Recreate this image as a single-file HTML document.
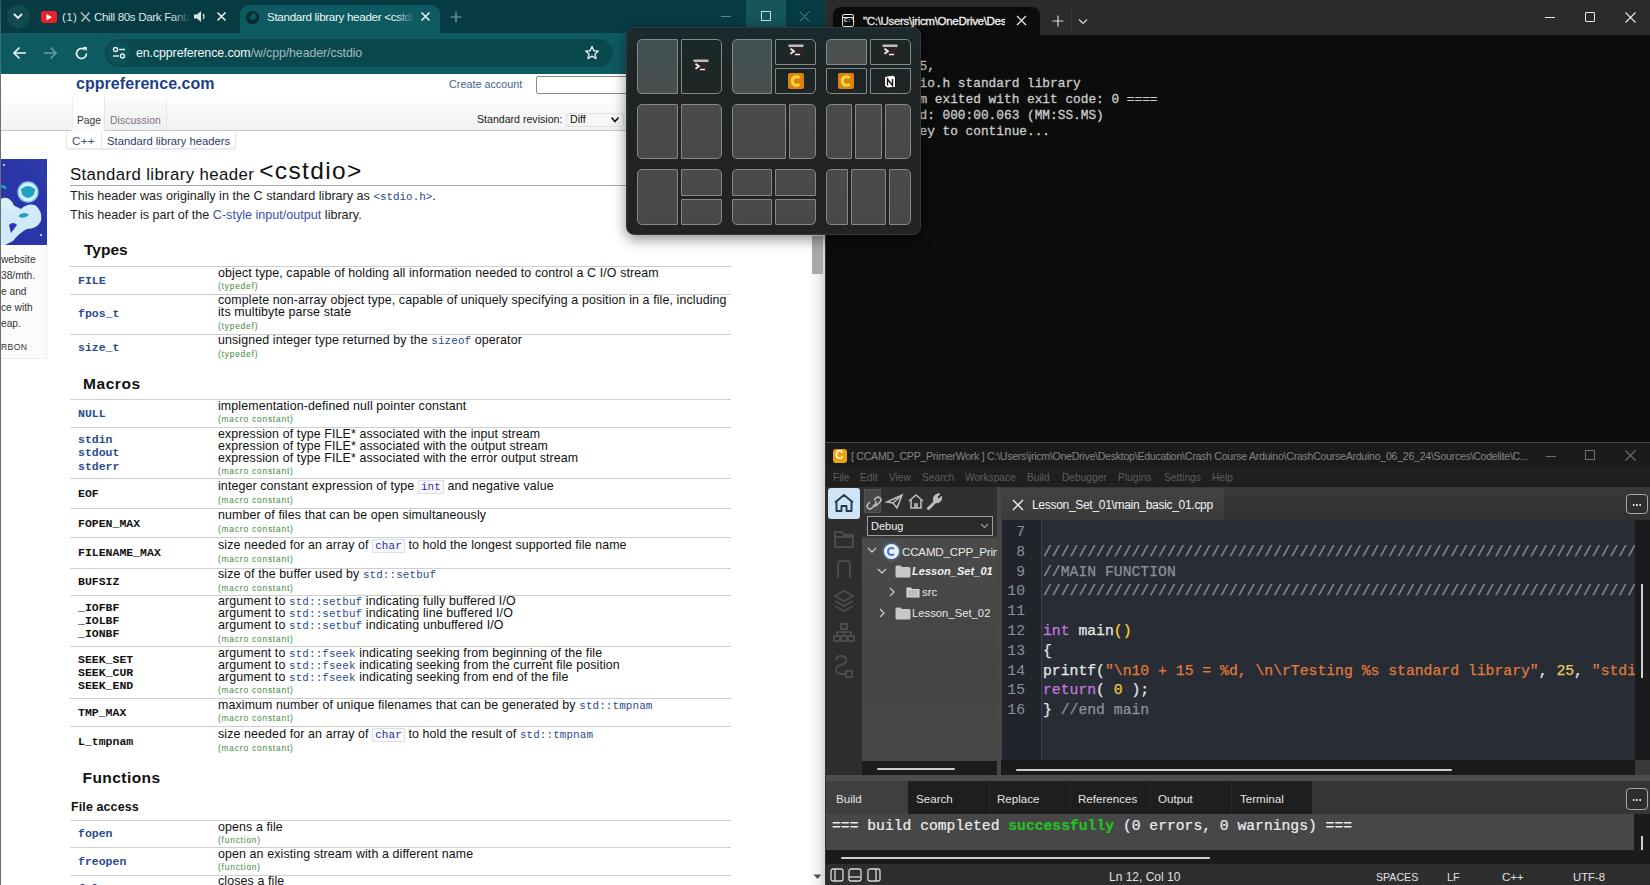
<!DOCTYPE html>
<html><head><meta charset="utf-8">
<style>
*{box-sizing:border-box}
html,body{margin:0;padding:0}
body{width:1650px;height:885px;position:relative;overflow:hidden;background:#0c0c0c;font-family:"Liberation Sans",sans-serif}
.a{position:absolute}
.m{font-family:"Liberation Mono",monospace}
.nw{white-space:pre}
/* browser page */
.pg{font-size:12.4px;color:#222;line-height:12px}
.ln{position:absolute;left:70px;width:661px;height:1px;background:#cfcfcf}
.dsc{position:absolute;left:218px;white-space:pre;font-size:12.4px;letter-spacing:0.12px;color:#111}
.mk{position:absolute;left:218px;white-space:pre;font-size:8.4px;color:#3c8a3c;letter-spacing:0.2px}
.nm{position:absolute;left:78px;white-space:pre;font-family:"Liberation Mono",monospace;font-weight:bold;font-size:11.5px;color:#111}
.lk{color:#2a4b8d}
.cd{font-family:"Liberation Mono",monospace;color:#2a4b8d}
.h3{position:absolute;left:82px;font-weight:bold;font-size:14.5px;letter-spacing:0.9px;color:#111;white-space:pre}
.box{border:1px solid #dde;background:#f8f8ff;padding:0 2px}
</style></head>
<body>

<!-- ================= BROWSER ================= -->
<div class="a" id="browser" style="left:0;top:0;width:826px;height:885px;background:#fff;overflow:hidden">
  <!-- tab strip -->
  <div class="a" style="left:0;top:0;width:826px;height:33px;background:#073b44"></div>
  <div class="a" style="left:0;top:0;width:1px;height:885px;background:linear-gradient(#2f5a60 0px,#3f7a80 73px,#6e6e6e 74px,#6e6e6e 885px);z-index:5"></div>
  <!-- tab dropdown -->
  <div class="a" style="left:7px;top:5px;width:23px;height:23px;border-radius:12px;background:#134a50"></div>
  <svg class="a" style="left:12px;top:11px" width="12" height="10"><path d="M2 3 L6 7 L10 3" stroke="#e8f4f4" stroke-width="1.8" fill="none"/></svg>
  <!-- tab 1 -->
  <div class="a" style="left:41px;top:11px;width:16px;height:12px;border-radius:3px;background:#e8202a"></div>
  <svg class="a" style="left:46px;top:14px" width="7" height="7"><path d="M0.5 0 L6 3.2 L0.5 6.4Z" fill="#fff"/></svg>
  <div class="a nw" style="left:62px;top:10px;font-size:11.6px;color:#d8e6e6;letter-spacing:0.3px">(1)</div>
  <svg class="a" style="left:80px;top:12px" width="11" height="10"><path d="M1 0.5 L10 9.5 M9.5 0.5 L1.5 9.5" stroke="#a8bcbc" stroke-width="1.6"/></svg>
  <div class="a nw" style="left:94px;top:10px;width:95px;overflow:hidden;font-size:11.6px;color:#d8e6e6;letter-spacing:-0.35px">Chill 80s Dark Fantasy</div>
  <div class="a" style="left:172px;top:6px;width:18px;height:22px;background:linear-gradient(90deg,rgba(7,59,68,0),#073b44)"></div>
  <svg class="a" style="left:193px;top:10px" width="14" height="13"><path d="M1 4.5 H4 L8 1 V12 L4 8.5 H1Z" fill="#d8e6e6"/><path d="M10 4 Q12 6.5 10 9" stroke="#d8e6e6" stroke-width="1.3" fill="none"/></svg>
  <svg class="a" style="left:216px;top:11px" width="11" height="11"><path d="M1.5 1.5 L9.5 9.5 M9.5 1.5 L1.5 9.5" stroke="#e8f0f0" stroke-width="1.6"/></svg>
  <!-- active tab -->
  <div class="a" style="left:240px;top:5px;width:200px;height:30px;background:#0e5a61;border-radius:9px 9px 0 0"></div>
  <svg class="a" style="left:245px;top:10px" width="15" height="15"><circle cx="7.5" cy="7.5" r="5.5" stroke="#08282c" stroke-width="2.2" fill="none"/><path d="M7 4 A3.5 3.5 0 1 0 11 8" stroke="#08282c" stroke-width="1.5" fill="none"/></svg>
  <div class="a nw" style="left:267px;top:10px;width:146px;overflow:hidden;font-size:11.6px;color:#eef6f6;letter-spacing:-0.3px">Standard library header &lt;cstdio&gt;</div>
  <div class="a" style="left:396px;top:6px;width:18px;height:26px;background:linear-gradient(90deg,rgba(14,90,97,0),#0e5a61)"></div>
  <svg class="a" style="left:420px;top:11px" width="11" height="11"><path d="M1.5 1.5 L9.5 9.5 M9.5 1.5 L1.5 9.5" stroke="#e8f0f0" stroke-width="1.6"/></svg>
  <svg class="a" style="left:450px;top:11px" width="12" height="12"><path d="M6 0.5 V11.5 M0.5 6 H11.5" stroke="#7fa6a8" stroke-width="1.2"/></svg>
  <!-- window controls -->
  <div class="a" style="left:721px;top:16px;width:10px;height:1px;background:#5d8a8e"></div>
  <div class="a" style="left:746px;top:0;width:40px;height:34px;background:#15555b"></div>
  <div class="a" style="left:761px;top:11px;width:10px;height:10px;border:1px solid #c8dcdc"></div>
  <svg class="a" style="left:799px;top:11px" width="11" height="11"><path d="M0.5 0.5 L10.5 10.5 M10.5 0.5 L0.5 10.5" stroke="#5d8a8e" stroke-width="1"/></svg>

  <!-- toolbar -->
  <div class="a" style="left:0;top:33px;width:826px;height:41px;background:#0e5a61"></div>
  <svg class="a" style="left:12px;top:46px" width="15" height="14"><path d="M14 7 H2 M7.5 1.5 L2 7 L7.5 12.5" stroke="#e8f4f4" stroke-width="1.7" fill="none"/></svg>
  <svg class="a" style="left:43px;top:46px" width="15" height="14"><path d="M1 7 H13 M7.5 1.5 L13 7 L7.5 12.5" stroke="#6d9a9e" stroke-width="1.7" fill="none"/></svg>
  <svg class="a" style="left:74px;top:46px" width="15" height="15"><path d="M12.5 7.5 A5 5 0 1 1 10.5 3.5" stroke="#e8f4f4" stroke-width="1.7" fill="none"/><path d="M8.5 1 H12.8 V5.3Z" fill="#e8f4f4"/></svg>
  <div class="a" style="left:105px;top:39px;width:508px;height:28px;border-radius:14px;background:#0a4850"></div>
  <div class="a" style="left:107px;top:41px;width:24px;height:24px;border-radius:12px;background:#0c5058"></div>
  <svg class="a" style="left:112px;top:46px" width="14" height="14"><circle cx="3.5" cy="3.5" r="2" stroke="#e8f4f4" stroke-width="1.4" fill="none"/><path d="M7 3.5 H13" stroke="#e8f4f4" stroke-width="1.4"/><circle cx="10.5" cy="10" r="2" stroke="#e8f4f4" stroke-width="1.4" fill="none"/><path d="M1 10 H7" stroke="#e8f4f4" stroke-width="1.4"/></svg>
  <div class="a nw" style="left:136px;top:46px;font-size:12.4px;color:#f2f8f8;letter-spacing:-0.1px">en.cppreference.com<span style="color:#9fbcbe">/w/cpp/header/cstdio</span></div>
  <svg class="a" style="left:584px;top:45px" width="16" height="16"><path d="M8 1.5 L9.9 5.7 L14.4 6.1 L11 9.1 L12 13.6 L8 11.2 L4 13.6 L5 9.1 L1.6 6.1 L6.1 5.7Z" stroke="#e0eeee" stroke-width="1.4" fill="none" stroke-linejoin="round"/></svg>

  <!-- ===== page ===== -->
    <!-- site header -->
  <div class="a nw" style="left:76px;top:76px;font-weight:bold;font-size:16px;line-height:16px;color:#1d3f8a;letter-spacing:0.05px">cppreference.com</div>
  <div class="a nw" style="left:449px;top:78px;font-size:10.8px;line-height:12px;color:#48628c">Create account</div>
  <div class="a" style="left:536px;top:76px;width:100px;height:18px;border:1px solid #8a8a8a;border-radius:2px;background:#fff"></div>
  <!-- nav bar -->
  <div class="a" style="left:1px;top:96px;width:811px;height:34px;background:linear-gradient(#ffffff,#f2f2f2)"></div>
  <div class="a" style="left:1px;top:130px;width:811px;height:1px;background:#c8c8c8"></div>
  <div class="a" style="left:72px;top:97px;width:33px;height:34px;background:linear-gradient(#fff,#fafafa);border-left:1px solid #eee;border-right:1px solid #e4e4ee"></div>
  <div class="a" style="left:105px;top:100px;width:62px;height:30px;background:linear-gradient(#fafafa,#f0f0f2);border-right:1px solid #e4e4ee"></div>
  <div class="a nw" style="left:77px;top:115px;font-size:10.3px;line-height:12px;color:#3a3a3a">Page</div>
  <div class="a nw" style="left:110px;top:115px;font-size:10.3px;line-height:12px;color:#7a6e80;letter-spacing:0.1px">Discussion</div>
  <div class="a nw" style="left:477px;top:113px;font-size:10.6px;line-height:12px;color:#222">Standard revision:</div>
  <div class="a" style="left:566px;top:113px;width:58px;height:14px;border:1px solid #e0e0e0;border-radius:2px;background:#f6f6f6"></div>
  <div class="a nw" style="left:570px;top:113px;font-size:10.6px;line-height:13px;color:#111">Diff</div>
  <svg class="a" style="left:610px;top:116px" width="10" height="8"><path d="M1.5 1.5 L5 5.5 L8.5 1.5" stroke="#111" stroke-width="1.6" fill="none"/></svg>
  <!-- breadcrumbs -->
  <div class="a" style="left:66px;top:131px;width:170px;height:18px;border:1px solid #e6e6ee;border-top:0;border-radius:0 0 4px 4px;background:#fff;box-shadow:0 1px 1px #eee"></div>
  <div class="a" style="left:101px;top:132px;width:1px;height:16px;background:#e6e6ee"></div>
  <div class="a nw" style="left:72px;top:135px;font-size:11.6px;line-height:12px;color:#47506a;letter-spacing:0.3px">C++</div>
  <div class="a nw" style="left:107px;top:135px;font-size:11.25px;line-height:12px;color:#2e3b66">Standard library headers</div>
  <!-- left ad -->
  <div class="a" style="left:1px;top:159px;width:46px;height:200px;background:#fbfbfb;border-right:1px solid #eee;border-bottom:1px solid #eee"></div>
  <svg class="a" style="left:1px;top:159px" width="46" height="86" viewBox="0 0 46 86">
    <rect width="46" height="86" fill="#2a35a8"/>
    <path d="M46 0 L46 30 Q30 10 20 0Z" fill="#3040b0" opacity="0.5"/>
    <path d="M0 44 Q6 40 12 46 L20 50 Q26 44 34 46 Q42 52 40 62 Q36 70 26 70 Q18 74 12 82 L4 86 L0 86Z" fill="#cfeaf8"/>
    <path d="M0 40 Q6 36 12 44 Q14 50 10 52 Q4 48 0 50Z" fill="#d8f0fa"/>
    <circle cx="27" cy="33" r="10" fill="#d8f0fa" stroke="#7fc6ea" stroke-width="1.5"/>
    <path d="M20 30 Q27 24 34 30 Q34 38 27 39 Q20 38 20 30Z" fill="#1fa3c4"/>
    <path d="M18 56 Q24 52 28 56 Q24 60 18 58Z" fill="#2a9ac0"/>
    <path d="M8 66 Q12 62 16 66 L10 74Z" fill="#2a35a8"/>
    <path d="M0 28 Q3 26 5 30" stroke="#1fa3c4" stroke-width="2.5" fill="none"/>
    <circle cx="40" cy="76" r="1" fill="#cfe"/>
    <circle cx="3" cy="6" r="1" fill="#cfe"/>
  </svg>
  <div class="a nw" style="left:1px;top:252px;font-size:10.2px;line-height:16px;color:#333">website<br>38/mth.<br>e and<br>ce with<br>eap.</div>
  <div class="a nw" style="left:1px;top:342px;font-size:8.6px;line-height:10px;color:#333;letter-spacing:0.4px">RBON</div>
  <!-- h1 -->
  <div class="a nw" style="left:70px;top:162px;font-size:16.8px;line-height:20px;color:#111;letter-spacing:0.38px">Standard library header <span style="font-size:24.5px;letter-spacing:1.35px;position:relative;top:-1px">&lt;cstdio&gt;</span></div>
  <div class="a" style="left:70px;top:185px;width:742px;height:1px;background:#aaa"></div>
  <div class="a nw" style="left:70px;top:189px;font-size:12.6px;line-height:14px;color:#222">This header was originally in the <span style="letter-spacing:0.3px">C</span> standard library as <span class="cd" style="font-size:10.9px">&lt;stdio.h&gt;</span>.</div>
  <div class="a nw" style="left:70px;top:208px;font-size:12.6px;line-height:14px;color:#222">This header is part of the <span class="lk" style="color:#3555a5">C-style input/output</span> library.</div>
  <!-- section headings -->
  <div class="h3" style="left:84px;top:242px;line-height:16px;font-size:15.5px;letter-spacing:0px">Types</div>
  <div class="h3" style="left:83px;top:376px;line-height:16px;font-size:15.5px;letter-spacing:0.55px">Macros</div>
  <div class="h3" style="left:82.5px;top:770px;line-height:16px;font-size:15.5px;letter-spacing:0.45px">Functions</div>
  <div class="a nw" style="left:71px;top:800px;font-weight:bold;font-size:12.5px;line-height:14px;color:#111;letter-spacing:0.1px">File access</div>

  <div class="ln" style="top:266px"></div>
<div class="dsc" style="top:265.8px;left:218px">object type, capable of holding all information needed to control a C I/O stream</div>
<div class="mk" style="top:281.4px;letter-spacing:0.8px">(typedef)</div>
<div class="nm lk" style="top:273.6px">FILE</div>
<div class="ln" style="top:294px"></div>
<div class="dsc" style="top:293.0px;left:218px">complete non-array object type, capable of uniquely specifying a position in a file, including</div>
<div class="dsc" style="top:305.0px;left:218px">its multibyte parse state</div>
<div class="mk" style="top:320.6px;letter-spacing:0.8px">(typedef)</div>
<div class="nm lk" style="top:307.2px">fpos_t</div>
<div class="ln" style="top:334px"></div>
<div class="dsc" style="top:333.1px;left:218px">unsigned integer type returned by the <span class="cd" style="font-size:10.9px">sizeof</span> operator</div>
<div class="mk" style="top:348.7px;letter-spacing:0.8px">(typedef)</div>
<div class="nm lk" style="top:341.0px">size_t</div>
<div class="ln" style="top:399px"></div>
<div class="dsc" style="top:398.7px;left:218px">implementation-defined null pointer constant</div>
<div class="mk" style="top:414.3px;letter-spacing:0.8px">(macro constant)</div>
<div class="nm lk" style="top:406.8px">NULL</div>
<div class="ln" style="top:427px"></div>
<div class="dsc" style="top:426.5px;left:218px">expression of type FILE* associated with the input stream</div>
<div class="dsc" style="top:438.5px;left:218px">expression of type FILE* associated with the output stream</div>
<div class="dsc" style="top:450.5px;left:218px">expression of type FILE* associated with the error output stream</div>
<div class="mk" style="top:466.1px;letter-spacing:0.8px">(macro constant)</div>
<div class="nm lk" style="top:433.1px">stdin</div>
<div class="nm lk" style="top:446.3px">stdout</div>
<div class="nm lk" style="top:459.5px">stderr</div>
<div class="ln" style="top:478px"></div>
<div class="dsc" style="top:479.2px;left:218px">integer constant expression of type <span class="box cd" style="font-size:10.9px;color:#2b2f9a">int</span> and negative value</div>
<div class="mk" style="top:494.8px;letter-spacing:0.8px">(macro constant)</div>
<div class="nm" style="top:487.0px">EOF</div>
<div class="ln" style="top:508px"></div>
<div class="dsc" style="top:508.0px;left:218px">number of files that can be open simultaneously</div>
<div class="mk" style="top:523.6px;letter-spacing:0.8px">(macro constant)</div>
<div class="nm" style="top:516.5px">FOPEN_MAX</div>
<div class="ln" style="top:537px"></div>
<div class="dsc" style="top:538.2px;left:218px">size needed for an array of <span class="box cd" style="font-size:10.9px;color:#2b2f9a">char</span> to hold the longest supported file name</div>
<div class="mk" style="top:553.8px;letter-spacing:0.8px">(macro constant)</div>
<div class="nm" style="top:546.1px">FILENAME_MAX</div>
<div class="ln" style="top:568px"></div>
<div class="dsc" style="top:567.2px;left:218px">size of the buffer used by <span class="cd" style="font-size:10.9px">std::setbuf</span></div>
<div class="mk" style="top:582.8px;letter-spacing:0.8px">(macro constant)</div>
<div class="nm" style="top:574.8px">BUFSIZ</div>
<div class="ln" style="top:595px"></div>
<div class="dsc" style="top:594.1px;left:218px">argument to <span class="cd" style="font-size:10.9px">std::setbuf</span> indicating fully buffered I/O</div>
<div class="dsc" style="top:606.1px;left:218px">argument to <span class="cd" style="font-size:10.9px">std::setbuf</span> indicating line buffered I/O</div>
<div class="dsc" style="top:618.1px;left:218px">argument to <span class="cd" style="font-size:10.9px">std::setbuf</span> indicating unbuffered I/O</div>
<div class="mk" style="top:633.7px;letter-spacing:0.8px">(macro constant)</div>
<div class="nm" style="top:600.9px">_IOFBF</div>
<div class="nm" style="top:614.1px">_IOLBF</div>
<div class="nm" style="top:627.3px">_IONBF</div>
<div class="ln" style="top:646px"></div>
<div class="dsc" style="top:645.8px;left:218px">argument to <span class="cd" style="font-size:10.9px">std::fseek</span> indicating seeking from beginning of the file</div>
<div class="dsc" style="top:657.8px;left:218px">argument to <span class="cd" style="font-size:10.9px">std::fseek</span> indicating seeking from the current file position</div>
<div class="dsc" style="top:669.8px;left:218px">argument to <span class="cd" style="font-size:10.9px">std::fseek</span> indicating seeking from end of the file</div>
<div class="mk" style="top:685.4px;letter-spacing:0.8px">(macro constant)</div>
<div class="nm" style="top:652.8px">SEEK_SET</div>
<div class="nm" style="top:666.0px">SEEK_CUR</div>
<div class="nm" style="top:679.2px">SEEK_END</div>
<div class="ln" style="top:698px"></div>
<div class="dsc" style="top:697.8px;left:218px">maximum number of unique filenames that can be generated by <span class="cd" style="font-size:10.9px">std::tmpnam</span></div>
<div class="mk" style="top:713.4px;letter-spacing:0.8px">(macro constant)</div>
<div class="nm" style="top:705.9px">TMP_MAX</div>
<div class="ln" style="top:726px"></div>
<div class="dsc" style="top:727.1px;left:218px">size needed for an array of <span class="box cd" style="font-size:10.9px;color:#2b2f9a">char</span> to hold the result of <span class="cd" style="font-size:10.9px">std::tmpnam</span></div>
<div class="mk" style="top:742.7px;letter-spacing:0.8px">(macro constant)</div>
<div class="nm" style="top:734.7px">L_tmpnam</div>
<div class="ln" style="top:820px"></div>
<div class="dsc" style="top:819.5px;left:218px">opens a file</div>
<div class="mk" style="top:835.1px;letter-spacing:0.8px">(function)</div>
<div class="nm lk" style="top:827.3px">fopen</div>
<div class="ln" style="top:847px"></div>
<div class="dsc" style="top:846.8px;left:218px">open an existing stream with a different name</div>
<div class="mk" style="top:862.4px;letter-spacing:0.8px">(function)</div>
<div class="nm lk" style="top:854.7px">freopen</div>
<div class="ln" style="top:875px"></div>
<div class="dsc" style="top:874.3px;left:218px">closes a file</div>
<div class="mk" style="top:889.9px;letter-spacing:0.8px">(function)</div>
<div class="nm lk" style="top:882.1px">fclose</div>
  <!-- scrollbar -->
  <div class="a" style="left:811px;top:74px;width:14px;height:811px;background:linear-gradient(90deg,#fbfbfb 0%,#f0f0f0 55%,#d4d4d4 100%)"></div>
  <div class="a" style="left:812px;top:236px;width:11px;height:38px;background:#a9a9a9;border-radius:0"></div>
  <svg class="a" style="left:813px;top:874px" width="9" height="6"><path d="M0.5 0.5 H8.5 L4.5 5Z" fill="#505050"/></svg>
  <div class="a" style="left:825px;top:0;width:1px;height:885px;background:#333"></div>
</div>

<!-- ================= TERMINAL ================= -->
<div class="a" id="term" style="left:826px;top:0;width:824px;height:443px;background:#0c0c0c;overflow:hidden">
  <div class="a" style="left:0;top:0;width:824px;height:35px;background:#2b2b2b"></div>
  <div class="a" style="left:7px;top:7px;width:207px;height:30px;background:#0c0c0c;border-radius:8px 8px 0 0"></div>
  <!-- tab icon -->
  <div class="a" style="left:16px;top:14px;width:12px;height:13px;border:1.3px solid #e6e6e6;border-radius:2px"></div>
  <div class="a" style="left:16px;top:17px;width:12px;height:1px;background:#e6e6e6"></div>
  <div class="a nw m" style="left:18px;top:17px;font-size:6px;line-height:8px;color:#e6e6e6;font-weight:bold">C:\</div>
  <div class="a nw" style="left:37px;top:13px;width:142px;overflow:hidden;font-size:11.6px;line-height:15px;color:#f2f2f2;letter-spacing:-0.35px;-webkit-text-stroke-width:0.3px">"C:\Users\jricm\OneDrive\Desktop</div>
  <svg class="a" style="left:190px;top:15px" width="11" height="11"><path d="M1 1 L10 10 M10 1 L1 10" stroke="#e8e8e8" stroke-width="1.3"/></svg>
  <div class="a" style="left:245px;top:9px;width:1px;height:22px;background:#383838"></div>
  <svg class="a" style="left:226px;top:15px" width="12" height="12"><path d="M6 0.5 V11.5 M0.5 6 H11.5" stroke="#d8d8d8" stroke-width="1.2"/></svg>
  <svg class="a" style="left:252px;top:18px" width="10" height="7"><path d="M1 1.5 L5 5.5 L9 1.5" stroke="#d8d8d8" stroke-width="1.2" fill="none"/></svg>
  <!-- window controls -->
  <div class="a" style="left:719px;top:17px;width:10px;height:1px;background:#e8e8e8"></div>
  <div class="a" style="left:759px;top:12px;width:10px;height:10px;border:1px solid #e8e8e8;border-radius:1px"></div>
  <svg class="a" style="left:799px;top:12px" width="11" height="11"><path d="M0.5 0.5 L10.5 10.5 M10.5 0.5 L0.5 10.5" stroke="#e8e8e8" stroke-width="1.1"/></svg>
  <!-- content -->
  <div class="a nw m" style="left:9px;top:43px;font-size:12.8px;line-height:16.25px;color:#cccccc;-webkit-text-stroke:0.3px #cccccc">
10 + 15 = 25,
Testing stdio.h standard library
==== Program exited with exit code: 0 ====
Time elapsed: 000:00.063 (MM:SS.MS)
Press any key to continue...</div>
</div>

<!-- ================= CODELITE ================= -->
<div class="a" id="cl" style="left:826px;top:442px;width:824px;height:443px;background:#1c1c1c;overflow:hidden">
  <div class="a" style="left:0;top:0;width:824px;height:1px;background:#4a4a4a"></div>
  <!-- title bar -->
  <div class="a" style="left:0;top:1px;width:824px;height:23px;background:#1b1b1b"></div>
  <div class="a" style="left:7px;top:7px;width:14px;height:14px;border-radius:3px;background:#e8a21a"></div>
  <div class="a nw" style="left:9px;top:6px;font-weight:bold;font-size:12px;line-height:15px;color:#fff3b0">C</div>
  <div class="a nw" style="left:25px;top:7px;font-size:10.6px;line-height:14px;color:#858585;letter-spacing:-0.27px">[ CCAMD_CPP_PrimerWork ] C:\Users\jricm\OneDrive\Desktop\Education\Crash Course Arduino\CrashCourseArduino_06_26_24\Sources\Codelite\C...</div>
  <div class="a" style="left:720px;top:14px;width:10px;height:1px;background:#6e6e6e"></div>
  <div class="a" style="left:759px;top:8px;width:10px;height:10px;border:1px solid #6e6e6e"></div>
  <svg class="a" style="left:799px;top:8px" width="11" height="11"><path d="M0.5 0.5 L10.5 10.5 M10.5 0.5 L0.5 10.5" stroke="#6e6e6e" stroke-width="1.1"/></svg>
  <!-- menu bar -->
  <div class="a" style="left:0;top:24px;width:824px;height:21px;background:#1f1f1f"></div>
  <div class="a nw" style="top:29px;left:0;font-size:10.2px;line-height:13px;color:#5e5e5e">
    <span class="a" style="top:0;left:7px">File</span><span class="a" style="top:0;left:34px">Edit</span><span class="a" style="top:0;left:63px">View</span><span class="a" style="top:0;left:96px">Search</span><span class="a" style="top:0;left:139px">Workspace</span><span class="a" style="top:0;left:201px">Build</span><span class="a" style="top:0;left:236px">Debugger</span><span class="a" style="top:0;left:292px">Plugins</span><span class="a" style="top:0;left:338px">Settings</span><span class="a" style="top:0;left:386px">Help</span>
  </div>
  <!-- main area -->
  <div class="a" style="left:0;top:45px;width:36px;height:288px;background:#2d2d2d"></div>
  <div class="a" style="left:2px;top:46px;width:32px;height:31px;border-radius:3px;background:#cfe5f6"></div>
  <svg class="a" style="left:7px;top:50px" width="22" height="22"><path d="M2 10.5 L11 3 L20 10.5 M3.5 9.5 V19 H8.5 V14 H13.5 V19 H18.5 V9.5" stroke="#22384f" stroke-width="1.9" fill="none" stroke-linejoin="round"/></svg>
  <svg class="a" style="left:6px;top:86px" width="24" height="120" fill="none" stroke="#4b4b4b" stroke-width="2">
    <path d="M3 4 H10 L12 7 H21 V19 H3Z M3 9 H21"/>
    <path d="M6 50 V37 Q6 33 10 33 H14 Q18 33 18 37 V50"/>
    <path d="M12 63 L21 68 L12 73 L3 68Z M3 73 L12 78 L21 73 M3 78 L12 83 L21 78"/>
    <path d="M9 96 H15 V101 H9Z M5 104 H19 M5 104 V108 M12 101 V108 M19 104 V108 M2 108 H8 V113 H2Z M9 108 H15 V113 H9Z M16 108 H22 V113 H16Z"/>
  </svg>
  <svg class="a" style="left:6px;top:212px" width="24" height="24" fill="none" stroke="#4b4b4b" stroke-width="2"><path d="M4 6 Q4 2 9 2 Q14 2 14 6 Q14 10 9 11 Q4 12 4 16 Q4 20 9 20 H14 M14 17 H20 V23 H14Z"/></svg>
  <!-- workspace panel -->
  <div class="a" style="left:36px;top:45px;width:135px;height:51px;background:#303030"></div>
  <div class="a" style="left:38px;top:47px;width:17px;height:24px;background:#474747;border:1px solid #555"></div>
  <svg class="a" style="left:39px;top:50px" width="100" height="18" fill="none" stroke="#bdbdbd" stroke-width="1.6">
    <path d="M5 10 L3 12 Q1 14 3 16 Q5 18 7 16 L10 13 Q12 11 10 9 M9 8 L11 6 Q13 4 15 6 Q17 8 15 10 L12 13 Q10 15 8 13"/>
    <path d="M22 10 L37 3 L32 16 L28 11 Z M28 11 L37 3 M22 10 L28 11"/>
    <path d="M44 9 L51 3 L58 9 M46 8 V16 H56 V8 M50 16 V12 H52 V16"/>
    <path d="M63.5 16.5 L70.5 9.5" stroke-width="3" stroke-linecap="round"/><path d="M69 10 Q67 5 71 2.5 Q73 1.5 75 2 L72 5 L73.5 7 L76.5 4.5 Q77.5 8 74.5 10 Q72 11.5 69 10Z" fill="#bdbdbd" stroke-width="1"/>
  </svg>
  <div class="a" style="left:41px;top:74px;width:126px;height:20px;border:1px solid #9c9c9c;background:#2a2a2a"></div>
  <div class="a nw" style="left:45px;top:77px;font-size:11px;line-height:14px;color:#f0f0f0">Debug</div>
  <svg class="a" style="left:154px;top:81px" width="9" height="6"><path d="M1 1 L4.5 4.5 L8 1" stroke="#9a9a9a" stroke-width="1.2" fill="none"/></svg>
  <div class="a" style="left:36px;top:96px;width:135px;height:223px;background:linear-gradient(#4a4a4a,#444 60%,#484848)"></div>
  <div class="a" style="left:36px;top:94px;width:135px;height:2px;background:#383838"></div>
  <!-- tree -->
  <svg class="a" style="left:41px;top:104px" width="140" height="80" fill="none" stroke="#c8c8c8" stroke-width="1.3">
    <path d="M1 2 L5 6 L9 2"/>
    <path d="M11 23 L15 27 L19 23"/>
    <path d="M23 42 L27 46 L23 50"/>
    <path d="M13 63 L17 67 L13 71"/>
  </svg>
  <div class="a" style="left:58px;top:102px;width:15px;height:15px;border-radius:8px;background:#e8f2ff;box-shadow:0 0 4px #6a9ad8"></div>
  <div class="a" style="left:61px;top:105px;width:9px;height:9px;border-radius:5px;border:2.2px solid #4a78c8;border-right-color:transparent"></div>
  <div class="a nw" style="left:76px;top:102px;width:97px;overflow:hidden;font-size:11.6px;line-height:15px;color:#e8e8e8;letter-spacing:-0.2px">CCAMD_CPP_Primer</div>
  <svg class="a" style="left:69px;top:123px" width="16" height="13"><path d="M0.5 2 Q0.5 0.5 2 0.5 H5.5 L7 2 H14 Q15.5 2 15.5 3.5 V11 Q15.5 12.5 14 12.5 H2 Q0.5 12.5 0.5 11Z" fill="#c8c8c8"/></svg>
  <div class="a nw" style="left:86px;top:122px;font-weight:bold;font-style:italic;font-size:11px;line-height:15px;color:#f4f4f4;letter-spacing:0.05px">Lesson_Set_01</div>
  <svg class="a" style="left:80px;top:145px" width="14" height="11"><path d="M0.5 0.5 H5 L6 2 H13.5 V10.5 H0.5Z" fill="#d8d8d8"/><path d="M2 4 H12 M2 6 H12 M2 8 H12 M4 3 V10 M7 3 V10 M10 3 V10" stroke="#9a9a9a" stroke-width="0.6"/></svg>
  <div class="a nw" style="left:96px;top:143px;font-size:11.5px;line-height:15px;color:#e8e8e8">src</div>
  <svg class="a" style="left:69px;top:165px" width="16" height="13"><path d="M0.5 2 Q0.5 0.5 2 0.5 H5.5 L7 2 H14 Q15.5 2 15.5 3.5 V11 Q15.5 12.5 14 12.5 H2 Q0.5 12.5 0.5 11Z" fill="#c8c8c8"/></svg>
  <div class="a nw" style="left:86px;top:164px;font-size:11.2px;line-height:15px;color:#e8e8e8;letter-spacing:0.05px">Lesson_Set_02</div>
  <!-- workspace hscroll -->
  <div class="a" style="left:36px;top:319px;width:135px;height:14px;background:#1c1c1c"></div>
  <div class="a" style="left:51px;top:326px;width:78px;height:2px;background:#cfcfcf;border-radius:1px"></div>
  <!-- splitter v -->
  <div class="a" style="left:171px;top:45px;width:5px;height:288px;background:#474747"></div>
  <!-- editor tabs -->
  <div class="a" style="left:175px;top:45px;width:649px;height:33px;background:linear-gradient(#393939,#303030)"></div>
  <div class="a" style="left:175px;top:46px;width:223px;height:32px;background:linear-gradient(#434343,#3a3a3a)"></div>
  <svg class="a" style="left:186px;top:57px" width="12" height="12"><path d="M1 1 L11 11 M11 1 L1 11" stroke="#f0f0f0" stroke-width="1.4"/></svg>
  <div class="a nw" style="left:206px;top:56px;font-size:12px;line-height:14px;color:#f4f4f4;letter-spacing:-0.3px">Lesson_Set_01\main_basic_01.cpp</div>
  <div class="a" style="left:800px;top:52px;width:22px;height:20px;border:1.3px solid #a8a8a8;border-radius:4px;background:#2e2e2e"></div>
  <div class="a" style="left:806px;top:62px;width:10px;height:2px;background-image:radial-gradient(circle,#ddd 0.8px,transparent 1px);background-size:3.3px 2px"></div>
  <!-- editor -->
  <div class="a" style="left:176px;top:78px;width:39px;height:240px;background:#21252b"></div>
  <div class="a" style="left:215px;top:78px;width:1px;height:240px;background:#3b404a"></div>
  <div class="a" style="left:216px;top:78px;width:593px;height:240px;background:#282c34"></div>
  <div class="a" style="left:809px;top:78px;width:15px;height:240px;background:#1b1b1b"></div>
  <div class="a" style="left:815px;top:142px;width:2px;height:94px;background:#d0d0d0"></div>
  <div class="a nw m" style="left:176px;top:81px;width:23px;text-align:right;font-size:14.7px;line-height:19.8px;color:#8b9199">7<br>8<br>9<br>10<br>11<br>12<br>13<br>14<br>15<br>16</div>
  <div class="a nw m" style="left:217px;top:81px;width:592px;overflow:hidden;font-size:14.75px;line-height:19.8px;color:#e6e6e6;-webkit-text-stroke-width:0.25px">
<span style="color:#8b929c">///////////////////////////////////////////////////////////////////////</span>
<span style="color:#8b929c">//MAIN FUNCTION</span>
<span style="color:#8b929c">///////////////////////////////////////////////////////////////////////</span>

<span style="color:#c678dd">int</span> main<span style="color:#f2dc22">()</span>
{
printf(<span style="color:#e07b3a">"\n10 + 15 = %d, \n\rTesting %s standard library"</span>, <span style="color:#e8c860">25</span>, <span style="color:#e07b3a">"stdio.h"</span>);
<span style="color:#c678dd">return</span>( <span style="color:#e8c840">0</span> );
} <span style="color:#8b929c">//end main</span></div>
  <!-- editor hscroll -->
  <div class="a" style="left:175px;top:318px;width:634px;height:15px;background:#1b1b1b"></div>
  <div class="a" style="left:190px;top:327px;width:436px;height:2px;background:#cfcfcf;border-radius:1px"></div>
  <div class="a" style="left:809px;top:318px;width:15px;height:15px;background:#3a3a3a"></div>
  <!-- splitter h -->
  <div class="a" style="left:0;top:333px;width:824px;height:6px;background:#4d4d4d"></div>
  <!-- bottom tabs -->
  <div class="a" style="left:0;top:339px;width:824px;height:33px;background:#363636"></div>
  <div class="a" style="left:0;top:339px;width:486px;height:33px;background:#1e1e1e"></div>
  <div class="a" style="left:0;top:339px;width:82px;height:33px;background:#3f3f3f"></div>
  <div class="a" style="left:163px;top:340px;width:1px;height:31px;background:#2a2a2a"></div>
  <div class="a" style="left:244px;top:340px;width:1px;height:31px;background:#2a2a2a"></div>
  <div class="a" style="left:324px;top:340px;width:1px;height:31px;background:#2a2a2a"></div>
  <div class="a" style="left:405px;top:340px;width:1px;height:31px;background:#2a2a2a"></div>
  <div class="a nw" style="top:350px;left:0;font-size:11.6px;line-height:14px;color:#e4e4e4">
    <span class="a" style="top:0;left:10px">Build</span><span class="a" style="top:0;left:90px">Search</span><span class="a" style="top:0;left:171px">Replace</span><span class="a" style="top:0;left:252px">References</span><span class="a" style="top:0;left:332px">Output</span><span class="a" style="top:0;left:414px">Terminal</span>
  </div>
  <div class="a" style="left:800px;top:346px;width:22px;height:22px;border:1.3px solid #a8a8a8;border-radius:4px;background:#2e2e2e"></div>
  <div class="a" style="left:806px;top:357px;width:10px;height:2px;background-image:radial-gradient(circle,#ddd 0.8px,transparent 1px);background-size:3.3px 2px"></div>
  <!-- output -->
  <div class="a" style="left:0;top:372px;width:808px;height:36px;background:#474747"></div>
  <div class="a" style="left:808px;top:372px;width:16px;height:36px;background:#1b1b1b"></div>
  <div class="a" style="left:815px;top:394px;width:2px;height:14px;background:#d0d0d0"></div>
  <div class="a nw m" style="left:6px;top:375px;font-size:14.7px;line-height:18px;color:#eeeeee;-webkit-text-stroke-width:0.2px">=== build completed <span style="color:#22c322;font-weight:bold">successfully</span> (0 errors, 0 warnings) ===</div>
  <div class="a" style="left:0;top:408px;width:824px;height:14px;background:#1b1b1b"></div>
  <div class="a" style="left:15px;top:415px;width:369px;height:2px;background:#cfcfcf;border-radius:1px"></div>
  <!-- status bar -->
  <div class="a" style="left:0;top:422px;width:824px;height:21px;background:#2e2e2e"></div>
  <svg class="a" style="left:4px;top:426px" width="56" height="14" fill="none" stroke="#d8d8d8" stroke-width="1.3">
    <rect x="1" y="1" width="12" height="12" rx="2"/><path d="M5 1 V13"/>
    <rect x="19" y="1" width="12" height="12" rx="2"/><path d="M19 9 H31"/>
    <rect x="38" y="1" width="12" height="12" rx="2"/><path d="M46 1 V13"/>
  </svg>
  <div class="a" style="left:21px;top:424px;width:1px;height:19px;background:#3a3a3a"></div>
  <div class="a" style="left:40px;top:424px;width:1px;height:19px;background:#3a3a3a"></div>
  <div class="a nw" style="top:428px;left:0;font-size:12px;line-height:14px;color:#e0e0e0">
    <span class="a" style="top:0;left:283px">Ln 12, Col 10</span><span class="a" style="top:0;left:550px;font-size:10.6px">SPACES</span><span class="a" style="top:0;left:621px;font-size:11px">LF</span><span class="a" style="top:0;left:676px;font-size:11.5px">C++</span><span class="a" style="top:0;left:747px;font-size:11.3px">UTF-8</span>
  </div>
</div>

<div class="a" id="snap" style="left:626px;top:27px;width:295px;height:208px;border-radius:8px;background:linear-gradient(180deg,#1a2a2d 0%,#202424 25%,#232323 100%);border:1px solid #2f3a3c;box-shadow:0 4px 14px rgba(0,0,0,0.45);z-index:50"></div>
<div class="a" style="left:637px;top:39px;width:41px;height:55px;border:1px solid #828a8a;border-radius:5px 1px 1px 5px;background:linear-gradient(180deg,#415050,#4a4f4f);z-index:51"></div>
<div class="a" style="left:681px;top:39px;width:41px;height:55px;border:1px solid #828a8a;border-radius:1px 5px 5px 1px;background:linear-gradient(180deg,#1a2829,#1f2626);z-index:51"></div>
<div class="a" style="left:732px;top:39px;width:40px;height:55px;border:1px solid #828a8a;border-radius:5px 1px 1px 5px;background:linear-gradient(180deg,#415050,#4a4f4f);z-index:51"></div>
<div class="a" style="left:775px;top:39px;width:41px;height:26px;border:1px solid #828a8a;border-radius:1px 5px 1px 1px;background:linear-gradient(180deg,#1a2829,#1f2626);z-index:51"></div>
<div class="a" style="left:775px;top:68px;width:41px;height:26px;border:1px solid #828a8a;border-radius:1px 1px 5px 1px;background:linear-gradient(180deg,#1c2627,#202525);z-index:51"></div>
<div class="a" style="left:826px;top:39px;width:41px;height:26px;border:1px solid #828a8a;border-radius:5px 1px 1px 1px;background:linear-gradient(180deg,#485050,#4d4f4f);z-index:51"></div>
<div class="a" style="left:870px;top:39px;width:41px;height:26px;border:1px solid #828a8a;border-radius:1px 5px 1px 1px;background:linear-gradient(180deg,#1c2627,#202525);z-index:51"></div>
<div class="a" style="left:826px;top:68px;width:41px;height:26px;border:1px solid #828a8a;border-radius:1px 1px 1px 5px;background:linear-gradient(180deg,#1c2627,#202525);z-index:51"></div>
<div class="a" style="left:870px;top:68px;width:41px;height:26px;border:1px solid #828a8a;border-radius:1px 1px 5px 1px;background:linear-gradient(180deg,#1c2627,#202525);z-index:51"></div>
<div class="a" style="left:637px;top:104px;width:41px;height:55px;border:1px solid #828a8a;border-radius:5px 1px 1px 5px;background:linear-gradient(180deg,#4b4b4b,#484848);z-index:51"></div>
<div class="a" style="left:681px;top:104px;width:41px;height:55px;border:1px solid #828a8a;border-radius:1px 5px 5px 1px;background:linear-gradient(180deg,#4b4b4b,#484848);z-index:51"></div>
<div class="a" style="left:732px;top:104px;width:54px;height:55px;border:1px solid #828a8a;border-radius:5px 1px 1px 5px;background:linear-gradient(180deg,#4b4b4b,#484848);z-index:51"></div>
<div class="a" style="left:789px;top:104px;width:27px;height:55px;border:1px solid #828a8a;border-radius:1px 5px 5px 1px;background:linear-gradient(180deg,#4b4b4b,#484848);z-index:51"></div>
<div class="a" style="left:826px;top:104px;width:26px;height:55px;border:1px solid #828a8a;border-radius:5px 1px 1px 5px;background:linear-gradient(180deg,#4b4b4b,#484848);z-index:51"></div>
<div class="a" style="left:855px;top:104px;width:27px;height:55px;border:1px solid #828a8a;border-radius:1px 1px 1px 1px;background:linear-gradient(180deg,#4b4b4b,#484848);z-index:51"></div>
<div class="a" style="left:885px;top:104px;width:26px;height:55px;border:1px solid #828a8a;border-radius:1px 5px 5px 1px;background:linear-gradient(180deg,#4b4b4b,#484848);z-index:51"></div>
<div class="a" style="left:637px;top:169px;width:41px;height:56px;border:1px solid #828a8a;border-radius:5px 1px 1px 5px;background:linear-gradient(180deg,#4b4b4b,#484848);z-index:51"></div>
<div class="a" style="left:681px;top:169px;width:41px;height:27px;border:1px solid #828a8a;border-radius:1px 5px 1px 1px;background:linear-gradient(180deg,#4b4b4b,#484848);z-index:51"></div>
<div class="a" style="left:681px;top:199px;width:41px;height:26px;border:1px solid #828a8a;border-radius:1px 1px 5px 1px;background:linear-gradient(180deg,#4b4b4b,#484848);z-index:51"></div>
<div class="a" style="left:732px;top:169px;width:40px;height:27px;border:1px solid #828a8a;border-radius:5px 1px 1px 1px;background:linear-gradient(180deg,#4b4b4b,#484848);z-index:51"></div>
<div class="a" style="left:775px;top:169px;width:41px;height:27px;border:1px solid #828a8a;border-radius:1px 5px 1px 1px;background:linear-gradient(180deg,#4b4b4b,#484848);z-index:51"></div>
<div class="a" style="left:732px;top:199px;width:40px;height:26px;border:1px solid #828a8a;border-radius:1px 1px 1px 5px;background:linear-gradient(180deg,#4b4b4b,#484848);z-index:51"></div>
<div class="a" style="left:775px;top:199px;width:41px;height:26px;border:1px solid #828a8a;border-radius:1px 1px 5px 1px;background:linear-gradient(180deg,#4b4b4b,#484848);z-index:51"></div>
<div class="a" style="left:826px;top:169px;width:22px;height:56px;border:1px solid #828a8a;border-radius:5px 1px 1px 5px;background:linear-gradient(180deg,#4b4b4b,#484848);z-index:51"></div>
<div class="a" style="left:851px;top:169px;width:35px;height:56px;border:1px solid #828a8a;border-radius:1px 1px 1px 1px;background:linear-gradient(180deg,#4b4b4b,#484848);z-index:51"></div>
<div class="a" style="left:889px;top:169px;width:22px;height:56px;border:1px solid #828a8a;border-radius:1px 5px 5px 1px;background:linear-gradient(180deg,#4b4b4b,#484848);z-index:51"></div>
<svg class="a" style="left:693px;top:59px;z-index:52" width="16" height="13"><rect x="0.5" y="0.5" width="15" height="12" rx="1" fill="#2e2626"/><rect x="0.5" y="0.5" width="15" height="2.5" fill="#bdbdbd"/><path d="M2.5 4.8 L6 7.3 L2.5 9.8" stroke="#f4f4f4" stroke-width="1.7" fill="none"/><path d="M7 10.5 H12" stroke="#f4f4f4" stroke-width="1.4"/></svg>
<svg class="a" style="left:788px;top:44px;z-index:52" width="16" height="13"><rect x="0.5" y="0.5" width="15" height="12" rx="1" fill="#2e2626"/><rect x="0.5" y="0.5" width="15" height="2.5" fill="#bdbdbd"/><path d="M2.5 4.8 L6 7.3 L2.5 9.8" stroke="#f4f4f4" stroke-width="1.7" fill="none"/><path d="M7 10.5 H12" stroke="#f4f4f4" stroke-width="1.4"/></svg>
<svg class="a" style="left:882px;top:44px;z-index:52" width="16" height="13"><rect x="0.5" y="0.5" width="15" height="12" rx="1" fill="#2e2626"/><rect x="0.5" y="0.5" width="15" height="2.5" fill="#bdbdbd"/><path d="M2.5 4.8 L6 7.3 L2.5 9.8" stroke="#f4f4f4" stroke-width="1.7" fill="none"/><path d="M7 10.5 H12" stroke="#f4f4f4" stroke-width="1.4"/></svg>
<svg class="a" style="left:788px;top:73px;z-index:52" width="16" height="16"><rect x="0" y="0" width="16" height="16" rx="2" fill="#d9820e"/><path d="M11.6 5 A4.3 4.3 0 1 0 11.6 11" stroke="#ffd43a" stroke-width="3.2" fill="none"/></svg>
<svg class="a" style="left:838px;top:73px;z-index:52" width="16" height="16"><rect x="0" y="0" width="16" height="16" rx="2" fill="#d9820e"/><path d="M11.6 5 A4.3 4.3 0 1 0 11.6 11" stroke="#ffd43a" stroke-width="3.2" fill="none"/></svg>
<svg class="a" style="left:883px;top:74px;z-index:52" width="14" height="15"><path d="M1.5 2.5 L10 1 L12.5 3 V13.5 L4 14 L1.5 11.5Z" fill="#fff" stroke="#111" stroke-width="1"/><path d="M4.5 11.5 V5 L9.5 11.5 V5" stroke="#111" stroke-width="1.4" fill="none"/></svg>
</body></html>
